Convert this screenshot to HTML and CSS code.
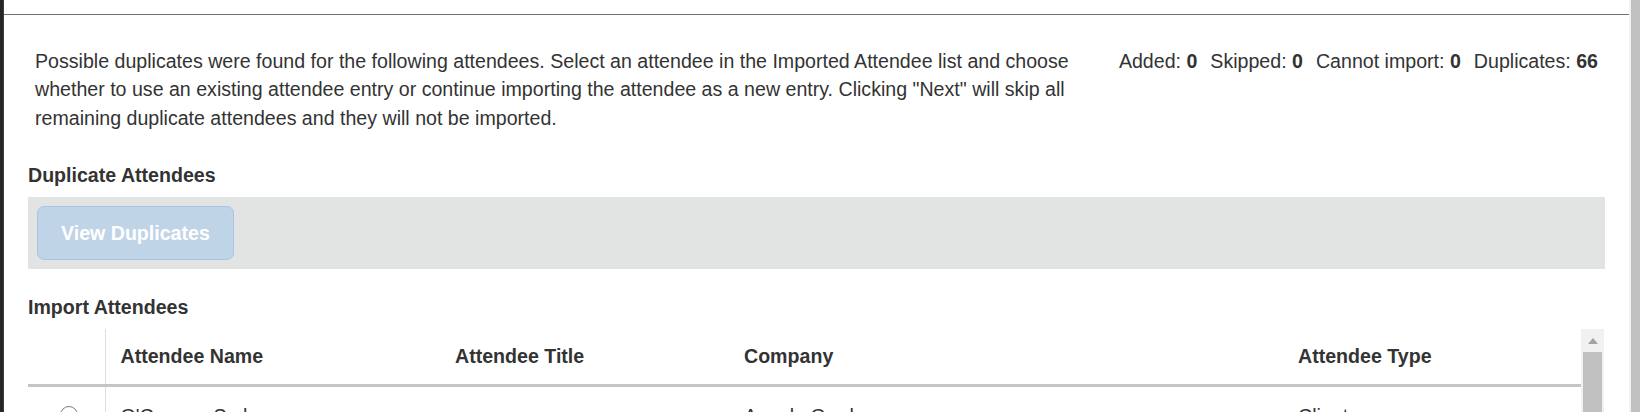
FILE: index.html
```html
<!DOCTYPE html>
<html lang="en">
<head>
<meta charset="utf-8">
<title>Import Attendees - Duplicates</title>
<link rel="stylesheet" href="styles.css">
</head>
<body>
<div class="overlay-edge"></div>
<div class="modal">
  <div class="modal-head"></div>
  <div class="modal-body">
    <div class="intro-row">
      <p class="intro">Possible duplicates were found for the following attendees. Select an attendee in the Imported Attendee list and choose whether to use an existing attendee entry or continue importing the attendee as a new entry. Clicking "Next" will skip all remaining duplicate attendees and they will not be imported.</p>
      <div class="stats">
        <span class="stat">Added: <b>0</b></span><span class="stat">Skipped: <b>0</b></span><span class="stat">Cannot import: <b>0</b></span><span class="stat">Duplicates: <b>66</b></span>
      </div>
    </div>
    <h4 class="section-title">Duplicate Attendees</h4>
    <div class="dup-bar">
      <button class="btn-view" type="button" disabled>View Duplicates</button>
    </div>
    <h4 class="section-title section-import">Import Attendees</h4>
    <div class="grid-wrap">
      <table class="grid">
        <colgroup>
          <col class="c-sel"><col class="c-name"><col class="c-title"><col class="c-company"><col class="c-type">
        </colgroup>
        <thead>
          <tr>
            <th class="sel"></th>
            <th>Attendee Name</th>
            <th>Attendee Title</th>
            <th>Company</th>
            <th>Attendee Type</th>
          </tr>
        </thead>
        <tbody>
          <tr>
            <td class="sel"><span class="radio"></span></td>
            <td>O'Connor, Sydney</td>
            <td></td>
            <td>Angelo Gordon</td>
            <td>Client</td>
          </tr>
          <tr>
            <td class="sel"><span class="radio"></span></td>
            <td>O'Connor, Sydney</td>
            <td></td>
            <td>Angelo Gordon</td>
            <td>Client</td>
          </tr>
        </tbody>
      </table>
      <div class="vscroll">
        <div class="vscroll-btn"><span class="tri-up"></span></div>
        <div class="vscroll-thumb"></div>
      </div>
    </div>
  </div>
</div>
<div class="page-scroll"><div class="page-thumb"></div></div>
</body>
</html>
```

FILE: styles.css
```css
* { box-sizing: border-box; }

html, body {
  margin: 0;
  height: 412px;
  overflow: hidden;
  background: #fff;
}

body {
  display: flex;
  font-family: "Liberation Sans", Arial, sans-serif;
  font-size: 19.6px;
  line-height: 28.3px;
  color: #333;
}

.overlay-edge {
  flex: 0 0 4px;
  background: #262626;
  border-right: 1px solid #3c3c3c;
}

.modal {
  flex: 1 1 auto;
  min-width: 0;
  background: #fff;
  display: flex;
  flex-direction: column;
  overflow: hidden;
}

.modal-head {
  height: 15px;
  flex: 0 0 15px;
  border-bottom: 1px solid #707070;
}

.modal-body {
  padding: 32px 24px 0 24px;
}

.intro-row {
  display: flex;
}

.intro {
  flex: 0 0 66.6667%;
  margin: 0;
  padding: 0 5px 0 7px;
}

.stats {
  flex: 1 1 auto;
  padding: 0 7px;
  text-align: right;
  white-space: nowrap;
}

.stat + .stat { margin-left: 13px; }
.stat b { font-weight: 700; }

.section-title {
  margin: 29px 0 8px 0;
  font-size: 19.6px;
  line-height: 28.3px;
  font-weight: 700;
  color: #333;
}

.section-import { margin-top: 24px; }

.dup-bar {
  background: #e2e3e3;
  padding: 9px;
  height: 72px;
}

.btn-view {
  font-family: "Liberation Sans", Arial, sans-serif;
  font-size: 19.6px;
  line-height: 28.3px;
  font-weight: 700;
  color: #fff;
  background: #bfd4e6;
  border: 1px solid #a8c6e3;
  border-radius: 7px;
  padding: 12px 23px;
  height: 54px;
  cursor: not-allowed;
}

.grid-wrap {
  display: flex;
  height: 200px;
}

.grid {
  width: 1553px;
  flex: 0 0 1553px;
  border-collapse: collapse;
  table-layout: fixed;
}

.c-sel { width: 77px; }
.c-name { width: 335px; }
.c-title { width: 289px; }
.c-company { width: 554px; }
.c-type { width: 298px; }

.grid th,
.grid td {
  text-align: left;
  padding: 13px 15px;
  white-space: nowrap;
  vertical-align: top;
}

.grid th {
  font-weight: 700;
  height: 55px;
  border-bottom: 3px solid #c5c5c5;
}

.grid td {
  padding-top: 15px;
  font-weight: 400;
}

.grid .sel {
  border-right: 1px solid #dedede;
  padding: 0;
}

.grid td.sel { padding: 19px 0 0 32px; }

.radio {
  display: block;
  width: 18px;
  height: 18px;
  border: 1px solid #7a7a7a;
  border-radius: 50%;
  background: #fff;
}

.vscroll {
  flex: 0 0 23px;
  width: 23px;
  background: #f1f1f1;
  display: flex;
  flex-direction: column;
  align-items: center;
}

.vscroll-btn {
  height: 23px;
  width: 23px;
  display: flex;
  align-items: center;
  justify-content: center;
}

.tri-up {
  width: 0;
  height: 0;
  border-left: 5.5px solid transparent;
  border-right: 5.5px solid transparent;
  border-bottom: 6px solid #a3a3a3;
}

.vscroll-thumb {
  width: 19px;
  flex: 1 1 auto;
  background: #c1c1c1;
}

.page-scroll {
  flex: 0 0 11px;
  background: #f1f1f1;
  padding-left: 2px;
}

.page-thumb {
  height: 100%;
  background: #c1c1c1;
}
```
